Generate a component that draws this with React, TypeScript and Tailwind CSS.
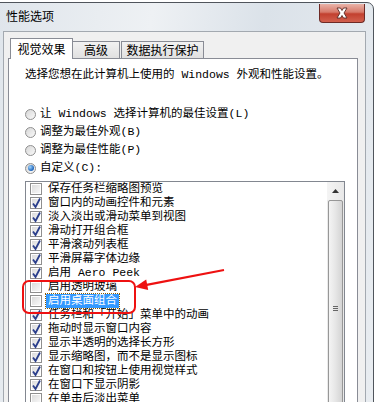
import { FC } from "react";

const items: [string, boolean][] = [
  ["保存任务栏缩略图预览", false],
  ["窗口内的动画控件和元素", true],
  ["淡入淡出或滑动菜单到视图", true],
  ["滑动打开组合框", true],
  ["平滑滚动列表框", true],
  ["平滑屏幕字体边缘", true],
  ["启用 Aero Peek", true],
  ["启用透明玻璃", false],
  ["启用桌面组合", false],
  ["任务栏和「开始」菜单中的动画", true],
  ["拖动时显示窗口内容", true],
  ["显示半透明的选择长方形", true],
  ["显示缩略图，而不是显示图标", true],
  ["在窗口和按钮上使用视觉样式", true],
  ["在窗口下显示阴影", true],
  ["在单击后淡出菜单", false],
];

const radios = [
  ["让 Windows 选择计算机的最佳设置(L)", false],
  ["调整为最佳外观(B)", false],
  ["调整为最佳性能(P)", false],
  ["自定义(C):", true],
] as const;

export default function App() {
  return (
    <div className="relative w-[382px] h-[402px] overflow-hidden bg-white font-['Noto_Sans_CJK_SC',sans-serif] text-black">
      {/* window frame */}
      <div className="ml-[-5px] mt-[2px] w-[379px] h-[430px] border border-[#50555c] rounded-tr-[7px] bg-[linear-gradient(100deg,#dfe5eb_0%,#eef1f4_35%,#dbe2e9_60%,#e9edf1_100%)] px-[7px] flex flex-col">
        {/* title bar */}
        <div className="h-[28px] shrink-0 flex items-start justify-between">
          <span className="pl-[3px] mt-[5px] text-[12px] leading-[16px]">性能选项</span>
          <CloseButton />
        </div>

        {/* client area */}
        <div className="flex-1 shrink-0 bg-[#f0f0f0] border border-[#a3a9b0] pl-[4px] pr-[7px] pt-[6px]">
          {/* tabs */}
          <div className="relative z-10 flex items-end h-[21px] -mb-px ml-[2px] text-[12px]">
            <div className="w-[63px] h-[21px] bg-white border border-b-0 border-[#898c95] flex items-center justify-center leading-none">
              视觉效果
            </div>
            <div className="w-[47px] h-[18px] border border-l-0 border-[#898c95] bg-[linear-gradient(#f2f2f2,#e0e0e0)] flex items-center justify-center leading-none">
              高级
            </div>
            <div className="ml-[1px] w-[83px] h-[18px] border border-[#898c95] bg-[linear-gradient(#f2f2f2,#e0e0e0)] flex items-center justify-center leading-none">
              数据执行保护
            </div>
          </div>

          {/* tab panel */}
          <div className="h-[400px] bg-white border border-[#898c95] pt-[9px] pl-[16px] pr-[12px] font-['Liberation_Mono','Noto_Sans_CJK_SC',monospace] text-[11.5px]">
            <p className="leading-[14px] whitespace-nowrap">选择您想在此计算机上使用的 Windows 外观和性能设置。</p>

            <div className="mt-[23px] flex flex-col">
              {radios.map(([label, on]) => (
                <div key={label} className="h-[18px] flex items-center gap-[4px] whitespace-nowrap">
                  <Radio on={on} />
                  <span className="leading-[14px]">{label}</span>
                </div>
              ))}
            </div>

            {/* list box */}
            <div className="mt-[4px] h-[240px] border border-[#828790] flex">
              <div className="flex-1 flex flex-col">
                {items.map(([label, on], i) => (
                  <div key={label} className="h-[14px] shrink-0 flex items-center pl-[4px] gap-[6px] whitespace-nowrap">
                    <Check on={on} />
                    {i === 8 ? (
                      <span className="ml-[-2px] px-[2px] h-[14px] leading-[14px] bg-[#3399ff] text-white outline-1 outline-dotted outline-[#8a5a00]">
                        {label}
                      </span>
                    ) : (
                      <span className="leading-[14px]">{label}</span>
                    )}
                  </div>
                ))}
              </div>
              <ScrollBar />
            </div>
          </div>
        </div>
      </div>

      {/* red annotation */}
      <div className="absolute left-[22px] top-[280px] w-[114px] h-[34px] border-2 border-[#ee1111] rounded-[7px]" />
      <svg className="absolute left-0 top-0" width="382" height="402">
        <line x1="224" y1="270" x2="144" y2="285.3" stroke="#ee1111" strokeWidth="2.2" />
        <polygon points="135,287 148.2,290 146.2,279.6" fill="#ee1111" />
      </svg>
    </div>
  );
}

const CloseButton: FC = () => (
  <div className="mr-[1px] mt-[1px] w-[46px] h-[19px] rounded-b-[4px] border border-t-0 border-[#6e2a25] bg-[linear-gradient(#e9b3a8_0%,#d77a6b_45%,#c2402f_55%,#d2604e_100%)] flex items-center justify-center">
    <svg width="14" height="12" viewBox="0 0 14 12">
      <path
        d="M2 1 L5.5 1 L7 3.5 L8.5 1 L12 1 L9 6 L12 11 L8.5 11 L7 8.5 L5.5 11 L2 11 L5 6 Z"
        fill="#ffffff"
        stroke="#5a2a26"
        strokeWidth="0.9"
        strokeLinejoin="round"
      />
    </svg>
  </div>
);

const Radio: FC<{ on: boolean }> = ({ on }) => (
  <div className="w-[11px] h-[11px] shrink-0 rounded-full border border-[#8f8f8f] bg-[linear-gradient(135deg,#d6d6d6,#fafafa)] flex items-center justify-center">
    {on && <div className="w-[6px] h-[6px] rounded-full bg-[radial-gradient(circle_at_35%_35%,#9fd6ff,#1c62b9_70%)]" />}
  </div>
);

const Check: FC<{ on: boolean }> = ({ on }) => (
  <div className="w-[12px] h-[12px] shrink-0 border border-[#8f8f8f] bg-white p-[1px]">
    <div className="w-full h-full bg-[linear-gradient(135deg,#dcdcdc,#f8f8f8)] relative">
      {on && (
        <svg className="absolute left-[-1px] top-[-2px]" width="11" height="12" viewBox="0 0 11 12">
          <path d="M2 6.5 L4.5 10 L9 1.5" fill="none" stroke="#2b3f8c" strokeWidth="1.8" />
        </svg>
      )}
    </div>
  </div>
);

const ScrollBar: FC = () => (
  <div className="w-[17px] flex flex-col bg-[#eaeaea]">
    <div className="h-[18px] shrink-0 bg-[linear-gradient(90deg,#f4f4f4,#e8e8e8)] flex items-center justify-center">
      <svg width="7" height="4" viewBox="0 0 7 4">
        <path d="M0 4 L3.5 0 L7 4 Z" fill="#333" />
      </svg>
    </div>
    <div className="flex-1 mx-[1px] rounded-[2px] border border-[#979797] bg-[linear-gradient(90deg,#f4f4f4,#e6e6e6_50%,#d4d4d4)] flex flex-col items-center pt-[105px]">
      <div className="w-[5px] flex flex-col gap-[1px]">
        <div className="h-[1px] bg-[#666]" />
        <div className="h-[1px] bg-[#666]" />
        <div className="h-[1px] bg-[#666]" />
      </div>
    </div>
  </div>
);
